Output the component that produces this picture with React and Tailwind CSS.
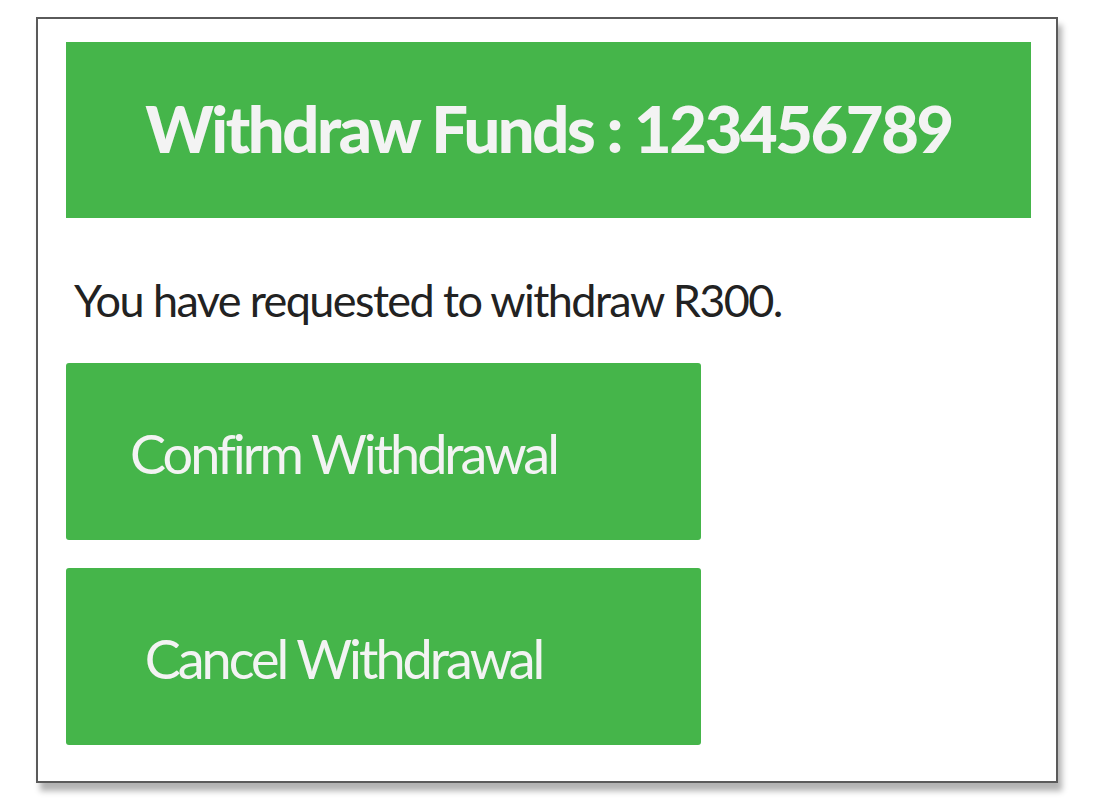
import React from 'react';

export default function App() {
  return (
    <div className="w-[1100px] h-[800px] bg-white pt-[17px] pl-[36px] font-['Lato',sans-serif]">
      <div className="w-[1022px] h-[766px] border-2 border-[#5a5a5a] bg-white shadow-[4px_8px_6px_rgba(0,0,0,0.3)] pt-[23px] pl-[28px] pr-[25px]">
        <div className="h-[176px] bg-[#45b54a] flex items-center justify-center">
          <h1 className="text-[65px] font-black text-[#f3f3f3] tracking-[-2.4px] pb-[2px]">
            Withdraw Funds : 123456789
          </h1>
        </div>
        <p className="mt-[52px] ml-[8px] text-[45px] leading-[60px] text-[#222] tracking-[-1.6px]">
          You have requested to withdraw R300.
        </p>
        <div className="mt-[33px] flex flex-col gap-[28px]">
          <button className="w-[635px] h-[177px] rounded-[3px] bg-[#45b54a] text-[#f3f3f3] text-[54px] font-normal tracking-[-3px] pr-[80px] pt-[4px] text-center">
            Confirm Withdrawal
          </button>
          <button className="w-[635px] h-[177px] rounded-[3px] bg-[#45b54a] text-[#f3f3f3] text-[54px] font-normal tracking-[-3px] pr-[80px] pt-[4px] text-center">
            Cancel Withdrawal
          </button>
        </div>
      </div>
    </div>
  );
}
